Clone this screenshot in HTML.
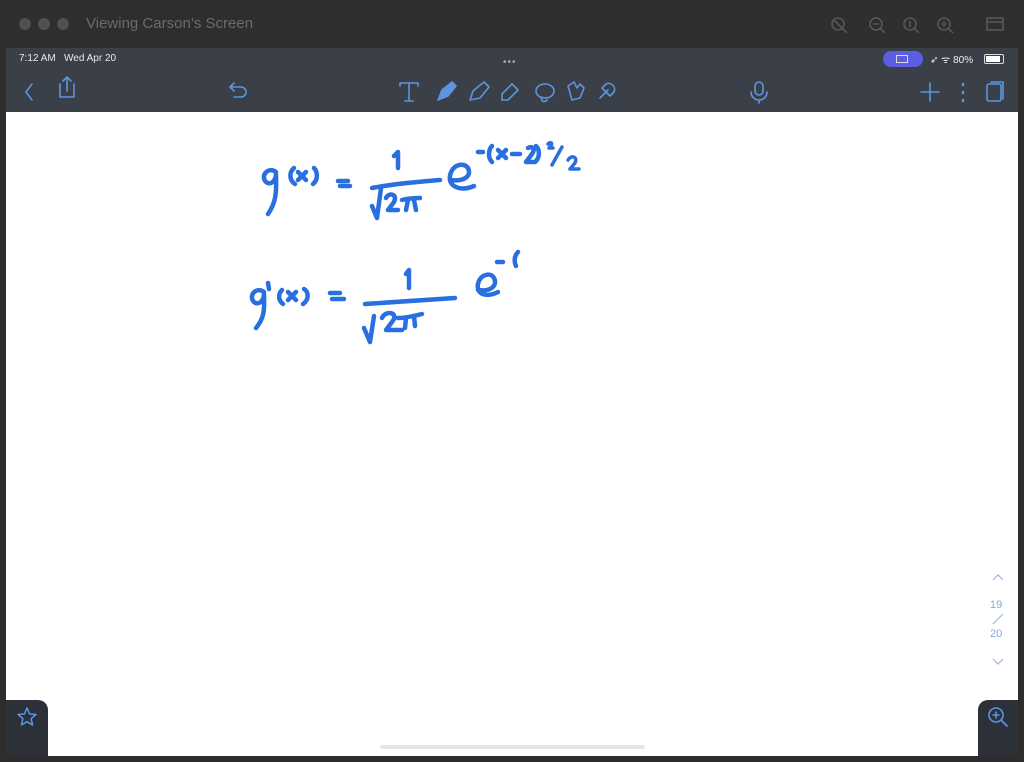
<!DOCTYPE html>
<html><head><meta charset="utf-8"><style>
*{margin:0;padding:0;box-sizing:border-box}
body{width:1024px;height:762px;background:#2d2d2d;overflow:hidden;position:relative;font-family:"Liberation Sans",sans-serif}
.abs{position:absolute}
</style></head><body>
<div class="abs" style="left:0;top:0;width:1024px;height:48px;background:#2e2e2e"></div>
<div class="abs" style="left:19px;top:18px;width:12px;height:12px;border-radius:6px;background:#505050"></div>
<div class="abs" style="left:38px;top:18px;width:12px;height:12px;border-radius:6px;background:#505050"></div>
<div class="abs" style="left:57px;top:18px;width:12px;height:12px;border-radius:6px;background:#505050"></div>
<div class="abs" style="left:86px;top:15px;color:#6b6b6b;font-size:15px">Viewing Carson’s Screen</div>
<svg class="abs" style="left:820px;top:12px" width="200" height="26" fill="none" stroke="#575757" stroke-width="1.6">
<circle cx="18" cy="12" r="6"/><path d="M22 16l5 5M14 8l8 8"/>
<circle cx="56" cy="12" r="6"/><path d="M60 16l5 5M53 12h6"/>
<circle cx="90" cy="12" r="6"/><path d="M94 16l5 5M90 9v6"/>
<circle cx="124" cy="12" r="6"/><path d="M128 16l5 5M121 12h6M124 9v6"/>
<rect x="167" y="6" width="16" height="12"/><path d="M167 10h16"/>
</svg>
<div class="abs" style="left:6px;top:48px;width:1012px;height:64px;background:#3b4048"></div>
<div class="abs" style="left:19px;top:53px;color:#e8e8e8;font-size:10px">7:12 AM&nbsp;&nbsp;&nbsp;Wed Apr 20</div>
<div class="abs" style="left:503px;top:57px;color:#aaa;font-size:10px;letter-spacing:1px">•••</div>
<div class="abs" style="left:883px;top:51px;width:40px;height:16px;border-radius:8px;background:#5b5ee0"></div>
<div class="abs" style="left:896px;top:55px;width:12px;height:8px;border:1px solid #ddd"></div>
<div class="abs" style="left:930px;top:52px;color:#eee;font-size:10px">➶ ᯤ 80%</div>
<div class="abs" style="left:984px;top:54px;width:20px;height:10px;border:1px solid #ddd;border-radius:2px;padding:1px"><div style="width:14px;height:6px;background:#fff"></div></div>
<svg class="abs" style="left:6px;top:70px" width="1012" height="42" fill="none" stroke="#5b95e0" stroke-width="1.6" stroke-linecap="round" stroke-linejoin="round">
<path d="M26 14l-6 8 6 8"/>
<path d="M54 14v13h14V14M61 8v13M57 11l4-4 4 4"/>
<path d="M224 17h11a5 5 0 010 10h-7M228 13l-4 4 4 4"/>
<path d="M394 13h18M403 13v18M399 31h8M394 13v3M412 13v3"/>
<path d="M432 30l4-10 10-8 4 4-8 10z" fill="#5b95e0"/>
<path d="M464 30l3-9 11-9 5 5-9 11z"/>
<path d="M496 24l10-10 6 6-10 10-6 0z"/>
<ellipse cx="539" cy="21" rx="9" ry="7"/><path d="M536 27c-2 4 2 6 5 3"/>
<path d="M562 16l4 14 8-2 4-10-4-4-3 4-3-6z"/>
<path d="M594 28l8-8M600 14a6 6 0 018 8l-4 4-8-8z"/>
<rect x="749" y="12" width="8" height="13" rx="4"/><path d="M745 22a8 8 0 0016 0M753 30v3"/>
<path d="M924 13v18M915 22h18"/>
<path d="M957 14v1M957 22v1M957 30v1" stroke-width="2.5"/>
<rect x="981" y="14" width="14" height="17" rx="2"/><path d="M985 12h12v17"/>
</svg>
<div class="abs" style="left:6px;top:112px;width:1012px;height:644px;background:#fff"></div>
<div class="abs" style="left:380px;top:745px;width:265px;height:4px;border-radius:2px;background:#e6e6e6"></div>
<svg class="abs" style="left:0;top:0" width="1024" height="762" fill="none" stroke="#2a6fdf" stroke-width="4.5" stroke-linecap="round" stroke-linejoin="round">
<path d="M276 172c-8-6-16 4-10 10 5 4 10-2 10-8 0 12 2 26-8 40"/>
<path d="M294 168c-5 4-5 12 1 16M298 172l8 8M306 172l-8 8M314 168c4 4 4 12-1 16"/>
<path d="M338 181h10M340 186h10"/>
<path d="M394 156l4-4v16"/>
<path d="M372 188c20-4 45-6 68-8"/>
<path d="M372 206l5 12 4-30"/><path d="M386 198c3-6 12-4 8 4l-6 8h10"/><path d="M402 200c8-2 14-2 18-2M408 200l-2 10M414 200l2 10"/>
<path d="M450 180c14 2 22-4 18-12-4-6-16-4-18 8-2 10 10 16 24 10"/>
<path d="M478 152h5M492 146c-4 4-4 12 0 16M498 150l8 8M506 150l-8 8M512 154h8M528 148c4-2 8 0 4 6l-6 8h8M536 146c4 4 4 12-1 16"/>
<path d="M548 144c2-2 5-2 3 2l-2 2h4M552 165l10-18M568 160c3-5 10-4 7 3l-5 6h9" stroke-width="3.5"/>
<path d="M264 292c-8-6-16 4-10 10 5 4 10-2 10-8 0 12 2 22-8 34"/>
<path d="M268 283l1 6M282 290c-4 4-4 10 1 14M288 292l8 8M296 292l-8 8M304 289c5 3 5 11-1 15"/>
<path d="M330 293h10M332 299h12"/>
<path d="M406 274l3-4v18"/>
<path d="M365 304c30-2 60-4 90-6"/>
<path d="M364 328l6 14 4-26"/><path d="M382 318c3-8 18-6 10 4l-6 8h16M398 318c8 0 16-2 24-4M406 318l-1 10M414 316l1 10"/>
<path d="M478 290c12 2 20-4 16-12-3-6-14-4-16 6-2 10 8 14 20 8"/>
<path d="M497 262h6M518 252c-4 4-4 10-2 14"/>
</svg>
<div class="abs" style="left:6px;top:700px;width:42px;height:56px;background:#2c3038;border-radius:0 10px 0 0"></div>
<svg class="abs" style="left:16px;top:706px" width="22" height="22" fill="none" stroke="#5b95e0" stroke-width="1.5" stroke-linejoin="round"><path d="M11 2l2.6 6 6.4.5-4.9 4.2 1.5 6.3L11 15.7 5.4 19l1.5-6.3L2 8.5 8.4 8z"/></svg>
<div class="abs" style="left:978px;top:700px;width:40px;height:56px;background:#2c3038;border-radius:10px 0 0 0"></div>
<svg class="abs" style="left:986px;top:705px" width="24" height="24" fill="none" stroke="#5b95e0" stroke-width="1.6" stroke-linecap="round"><circle cx="10" cy="10" r="7"/><path d="M15 15l6 6M7 10h6M10 7v6"/></svg>
<svg class="abs" style="left:990px;top:572px" width="16" height="100" fill="none" stroke="#9db4d8" stroke-width="1.2"><path d="M3 8l5-5 5 5M3 87l5 5 5-5M3 52l10-10"/></svg>
<div class="abs" style="left:990px;top:599px;color:#8aa8d6;font-size:11px">19</div>
<div class="abs" style="left:990px;top:628px;color:#8aa8d6;font-size:11px">20</div>
</body></html>
